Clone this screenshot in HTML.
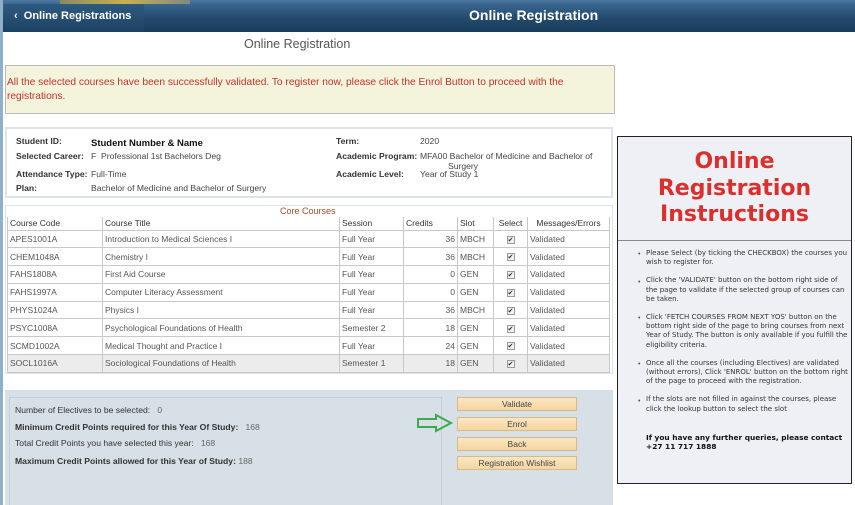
<!DOCTYPE html>
<html><head><style>
*{margin:0;padding:0;box-sizing:border-box}
body{width:855px;height:505px;overflow:hidden;background:#fff;font-family:"Liberation Sans",Arial,sans-serif;position:relative;color:#333}
.a{position:absolute}
#hdr{left:0;top:0;width:855px;height:32px;background:linear-gradient(#4f7ba0 0,#3a6690 12%,#22486b 60%,#1a3d5c 100%)}
#lstrip{left:0;top:0;width:3px;height:505px;background:#8fb0c8}
.t{font-size:8.6px;color:#444;white-space:nowrap}
.b{font-weight:bold;color:#333}
table{border-collapse:collapse;font-size:8.5px;color:#555}
td{border:1px solid #c8c8c8;height:17.8px;padding:0 2px;white-space:nowrap}
.btn{position:absolute;left:457px;width:120px;height:14px;background:linear-gradient(#fbe6c2,#f5d6a0);border:1px solid #d8b988;font-size:8.5px;color:#444;text-align:center;line-height:12px}
.cb{display:inline-block;width:8px;height:8px;border:1px solid #999;background:#f2f2f2;font-size:7px;line-height:7px;text-align:center;color:#333;vertical-align:middle}
</style></head><body>
<div class="a" id="hdr"></div>
<div class="a" style="left:4px;top:4px;width:140px;height:28px;background:linear-gradient(#2e5a80,#1d4262)"></div>
<div class="a" style="left:60px;top:0;width:130px;height:4px;background:linear-gradient(90deg,#8a8a60,#c9b050,#7f8a80)"></div>
<div class="a" id="lstrip"></div>
<div class="a" style="left:14px;top:10px;color:#fff;font-size:11px;font-weight:bold">‹&nbsp;&nbsp;Online Registrations</div>
<div class="a" style="left:469px;top:7px;color:#fff;font-size:14px;font-weight:bold">Online Registration</div>
<div class="a" style="left:244px;top:37px;color:#555;font-size:12.5px">Online Registration</div>
<div class="a" style="left:5px;top:65px;width:610px;height:49px;background:#f4f4dc;border:1px solid #bbb"></div>
<div class="a" style="left:7px;top:76px;width:585px;color:#c0332e;font-size:10.2px;line-height:14px">All the selected courses have been successfully validated. To register now, please click the Enrol Button to proceed with the registrations.</div>
<div class="a" style="left:5px;top:127px;width:608px;height:71px;border:2px solid #dde3e8"></div>
<div class="a t b" style="left:16px;top:136px">Student ID:</div>
<div class="a" style="left:91px;top:138px;font-size:9.5px;font-weight:bold;color:#111">Student Number &amp; Name</div>
<div class="a t b" style="left:16px;top:151px">Selected Career:</div>
<div class="a t" style="left:91px;top:151px">F&nbsp; Professional 1st Bachelors Deg</div>
<div class="a t b" style="left:16px;top:169px">Attendance Type:</div>
<div class="a t" style="left:91px;top:169px">Full-Time</div>
<div class="a t b" style="left:16px;top:183px">Plan:</div>
<div class="a t" style="left:91px;top:183px">Bachelor of Medicine and Bachelor of Surgery</div>
<div class="a t b" style="left:336px;top:136px">Term:</div>
<div class="a t" style="left:420px;top:136px">2020</div>
<div class="a t b" style="left:336px;top:151px">Academic Program:</div>
<div class="a t" style="left:420px;top:151px;line-height:10px">MFA00 Bachelor of Medicine and Bachelor of<br><span style="padding-left:28px">Surgery</span></div>
<div class="a t b" style="left:336px;top:169px">Academic Level:</div>
<div class="a t" style="left:420px;top:169px">Year of Study 1</div>
<div class="a" style="left:5px;top:205px;width:608px;height:169px;border:1px solid #dde3e8"></div>
<div class="a" style="left:280px;top:206px;font-size:9px;color:#a0522d">Core Courses</div>
<table class="a" style="left:7px;top:217px;width:603px">
<colgroup><col style="width:95px"><col style="width:237px"><col style="width:64px"><col style="width:54px"><col style="width:36px"><col style="width:34px"><col></colgroup>
<tr style="color:#333;font-size:8.5px"><td style="height:13px;border-top:none">Course Code</td><td style="height:13px;border-top:none">Course Title</td><td style="height:13px;border-top:none">Session</td><td style="height:13px;border-top:none">Credits</td><td style="height:13px;border-top:none">Slot</td><td style="height:13px;border-top:none;text-align:center">Select</td><td style="height:13px;border-top:none;text-align:center">Messages/Errors</td></tr>
<tr><td>APES1001A</td><td>Introduction to Medical Sciences I</td><td>Full Year</td><td style="text-align:right">36</td><td>MBCH</td><td style="text-align:center"><span class="cb">✔</span></td><td>Validated</td></tr>
<tr><td>CHEM1048A</td><td>Chemistry I</td><td>Full Year</td><td style="text-align:right">36</td><td>MBCH</td><td style="text-align:center"><span class="cb">✔</span></td><td>Validated</td></tr>
<tr><td>FAHS1808A</td><td>First Aid Course</td><td>Full Year</td><td style="text-align:right">0</td><td>GEN</td><td style="text-align:center"><span class="cb">✔</span></td><td>Validated</td></tr>
<tr><td>FAHS1997A</td><td>Computer Literacy Assessment</td><td>Full Year</td><td style="text-align:right">0</td><td>GEN</td><td style="text-align:center"><span class="cb">✔</span></td><td>Validated</td></tr>
<tr><td>PHYS1024A</td><td>Physics I</td><td>Full Year</td><td style="text-align:right">36</td><td>MBCH</td><td style="text-align:center"><span class="cb">✔</span></td><td>Validated</td></tr>
<tr><td>PSYC1008A</td><td>Psychological Foundations of Health</td><td>Semester 2</td><td style="text-align:right">18</td><td>GEN</td><td style="text-align:center"><span class="cb">✔</span></td><td>Validated</td></tr>
<tr><td>SCMD1002A</td><td>Medical Thought and Practice I</td><td>Full Year</td><td style="text-align:right">24</td><td>GEN</td><td style="text-align:center"><span class="cb">✔</span></td><td>Validated</td></tr>
<tr style="background:#ececec"><td>SOCL1016A</td><td>Sociological Foundations of Health</td><td>Semester 1</td><td style="text-align:right">18</td><td>GEN</td><td style="text-align:center"><span class="cb">✔</span></td><td>Validated</td></tr>
</table>
<div class="a" style="left:5px;top:390px;width:608px;height:115px;background:#d6e0e6"></div>
<div class="a" style="left:9px;top:397px;width:433px;height:108px;border:1px solid #c4ced4;border-bottom:none"></div>
<div class="a t" style="left:15px;top:405px;color:#333">Number of Electives to be selected: &nbsp; <span style="color:#666">0</span></div>
<div class="a t b" style="left:15px;top:422px">Minimum Credit Points required for this Year Of Study: &nbsp; <span style="font-weight:normal;color:#666">168</span></div>
<div class="a t" style="left:15px;top:438px;color:#333">Total Credit Points you have selected this year: &nbsp; <span style="color:#666">168</span></div>
<div class="a t b" style="left:15px;top:456px">Maximum Credit Points allowed for this Year of Study: <span style="font-weight:normal;color:#666">188</span></div>
<div class="btn" style="top:397px">Validate</div>
<div class="btn" style="top:417px">Enrol</div>
<div class="btn" style="top:437px">Back</div>
<div class="btn" style="top:456px">Registration Wishlist</div>
<svg class="a" style="left:416px;top:413px" width="38" height="20"><path d="M2 6 H20 V2 L35 10 L20 18 V14 H2 Z" fill="none" stroke="#3ea84f" stroke-width="2"/></svg>
<div class="a" style="left:617px;top:136px;width:235px;height:348px;background:#eef0f5;border:1px solid #222"></div>
<div class="a" style="left:617px;top:149px;width:235px;text-align:center;color:#d9302e;font-family:'DejaVu Sans',sans-serif;font-weight:bold;font-size:22px;line-height:26.5px">Online<br>Registration<br>Instructions</div>
<div class="a" style="left:618px;top:240px;width:233px;height:1px;background:#888"></div>
<ul class="a" style="left:646px;top:249px;width:202px;font-family:'DejaVu Sans',sans-serif;font-size:7px;line-height:9.2px;color:#333;list-style:none">
<li style="margin-bottom:9px">Please Select (by ticking the CHECKBOX) the courses you wish to register for.</li>
<li style="margin-bottom:9px">Click the 'VALIDATE' button on the bottom right side of the page to validate if the selected group of courses can be taken.</li>
<li style="margin-bottom:9px">Click 'FETCH COURSES FROM NEXT YOS' button on the bottom right side of the page to bring courses from next Year of Study. The button is only available if you fulfill the eligibility criteria.</li>
<li style="margin-bottom:9px">Once all the courses (including Electives) are validated (without errors), Click 'ENROL' button on the bottom right of the page to proceed with the registration.</li>
<li>If the slots are not filled in against the courses, please click the lookup button to select the slot</li>
</ul>
<div class="a" style="left:638px;top:250px;font-size:7px;color:#555;line-height:9.2px">•<br><br><br>•<br><br><br><br>•<br><br><br><br><br>•<br><br><br><br>•</div>
<div class="a" style="left:646px;top:433px;font-family:'DejaVu Sans',sans-serif;font-weight:bold;font-size:7.4px;line-height:9px;color:#111">If you have any further queries, please contact<br>+27 11 717 1888</div>
</body></html>
